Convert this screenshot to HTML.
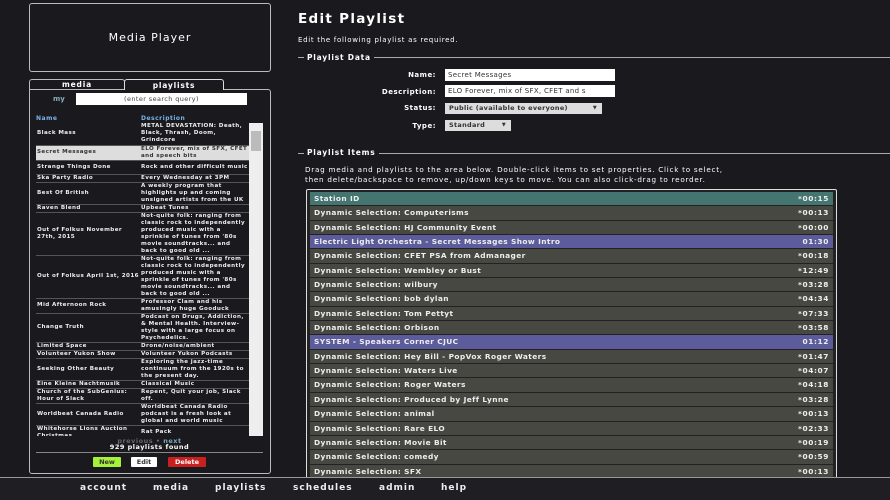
<!DOCTYPE html>
<html><head><meta charset="utf-8"><style>
*{margin:0;padding:0;box-sizing:border-box}
body{width:890px;height:500px;overflow:hidden;background:#1a191e;color:#fff;font-family:"DejaVu Sans","Liberation Sans",sans-serif;font-weight:bold;position:relative}
.abs{position:absolute}
.box{border:1px solid #bbb;border-radius:3px}
#lt td{font-size:5.6px;line-height:7px;vertical-align:middle;border-bottom:1px solid #555;padding:0 1px;color:#eee;letter-spacing:0.4px}
#lt{border-collapse:collapse;width:213px}
.row{height:14.35px;line-height:13px;font-size:7.4px;padding:0 4px;border-bottom:1.5px solid #222;background:#474842;display:flex;justify-content:space-between;letter-spacing:0.4px;color:#eee}
.row span:last-child{letter-spacing:0.6px}
.t{background:#447570}.p{background:#5c5c9c}
.lbl{font-size:7px;text-align:right;width:138px;letter-spacing:0.5px}
.inp{background:#fff;color:#333;font-size:7px;height:12px;line-height:12px;padding-left:3px;letter-spacing:0.3px;overflow:hidden;white-space:nowrap;font-weight:normal}
.sel{background:#ddd;color:#333;font-size:6.5px;height:11px;line-height:11px;padding-left:4px;letter-spacing:0.3px}
.nav span{position:absolute;top:483px;font-size:9px;letter-spacing:1px;color:#eee}
</style></head><body>
<div class="abs box" style="left:29px;top:3px;width:242px;height:69px;text-align:center;line-height:67px;font-size:11px;letter-spacing:1px;font-weight:normal">Media Player</div>
<div class="abs" style="left:29px;top:79px;width:96px;height:10px;border:1px solid #bbb;border-bottom:none;border-radius:3px 3px 0 0;font-size:7.5px;text-align:center;line-height:9px;letter-spacing:0.8px">media</div>
<div class="abs" style="left:124px;top:79px;width:100px;height:11px;border:1px solid #ddd;border-bottom:none;border-radius:3px 3px 0 0;font-size:7.5px;text-align:center;line-height:11px;letter-spacing:0.8px;background:#1a191e;z-index:2">playlists</div>
<div class="abs box" style="left:29px;top:89px;width:242px;height:385px;border-radius:0 3px 3px 3px"></div>
<div class="abs" style="left:53px;top:95px;font-size:7px;color:#8ab">my</div>
<div class="abs" style="left:76px;top:93px;width:171px;height:12px;background:#fff;color:#444;font-size:6.5px;text-align:center;line-height:12px;letter-spacing:0.4px;font-weight:normal">(enter search query)</div>
<div class="abs" style="left:36px;top:115px;font-size:6px;color:#7ab4e8;letter-spacing:0.5px">Name</div>
<div class="abs" style="left:141px;top:115px;font-size:6px;color:#7ab4e8;letter-spacing:0.5px">Description</div>
<div class="abs" style="left:36px;top:123px;width:213px;height:313px;overflow:hidden">
<table id="lt">
<tr style="height:22px"><td style="width:104px">Black Mass</td><td>METAL DEVASTATION: Death, Black, Thrash, Doom, Grindcore</td></tr>
<tr style="height:12px;background:#ddd"><td style="color:#333">Secret Messages</td><td style="color:#333">ELO Forever, mix of SFX, CFET and speech bits</td></tr>
<tr style="height:14px"><td>Strange Things Done</td><td>Rock and other difficult music</td></tr>
<tr style="height:8px"><td>Ska Party Radio</td><td>Every Wednesday at 3PM</td></tr>
<tr style="height:18px"><td>Best Of British</td><td>A weekly program that highlights up and coming unsigned artists from the UK</td></tr>
<tr style="height:7px"><td>Raven Blend</td><td>Upbeat Tunes</td></tr>
<tr style="height:43px"><td>Out of Folkus November 27th, 2015</td><td>Not-quite folk: ranging from classic rock to independently produced music with a sprinkle of tunes from '80s movie soundtracks... and back to good old ...</td></tr>
<tr style="height:42px"><td>Out of Folkus April 1st, 2016</td><td>Not-quite folk: ranging from classic rock to independently produced music with a sprinkle of tunes from '80s movie soundtracks... and back to good old ...</td></tr>
<tr style="height:14px"><td>Mid Afternoon Rock</td><td>Professor Clam and his amusingly huge Gooduck</td></tr>
<tr style="height:29px"><td>Change Truth</td><td>Podcast on Drugs, Addiction, &amp; Mental Health. Interview-style with a large focus on Psychedelics.</td></tr>
<tr style="height:7px"><td>Limited Space</td><td>Drone/noise/ambient</td></tr>
<tr style="height:7px"><td>Volunteer Yukon Show</td><td>Volunteer Yukon Podcasts</td></tr>
<tr style="height:20px"><td>Seeking Other Beauty</td><td>Exploring the jazz-time continuum from the 1920s to the present day.</td></tr>
<tr style="height:7px"><td>Eine Kleine Nachtmusik</td><td>Classical Music</td></tr>
<tr style="height:14px"><td>Church of the SubGenius: Hour of Slack</td><td>Repent, Quit your job, Slack off.</td></tr>
<tr style="height:21px"><td>Worldbeat Canada Radio</td><td>Worldbeat Canada Radio podcast is a fresh look at global and world music</td></tr>
<tr style="height:14px"><td>Whitehorse Lions Auction Christmas</td><td>Rat Pack</td></tr>
<tr style="height:14px"><td>CJUC Presents: Yukon Spotlight</td><td>All Yukon Music for the hour</td></tr>
</table></div>
<div class="abs" style="left:249px;top:123px;width:14px;height:313px;background:#eee"></div>
<div class="abs" style="left:251px;top:131px;width:10px;height:20px;background:#bbb"></div>
<div class="abs" style="left:36px;top:437px;width:227px;text-align:center;font-size:6.5px;color:#666;letter-spacing:0.5px">previous &bull; <span style="color:#7ab">next</span></div>
<div class="abs" style="left:36px;top:443px;width:227px;text-align:center;font-size:6.5px;letter-spacing:0.5px">929 playlists found</div>
<div class="abs" style="left:36px;top:452px;width:227px;height:1px;background:#888"></div>
<div class="abs" style="left:93px;top:457px;width:28px;height:10px;background:#a5f23a;color:#333;font-size:6.5px;text-align:center;line-height:10px;border-radius:1px">New</div>
<div class="abs" style="left:131px;top:457px;width:26px;height:10px;background:#fff;color:#333;font-size:6.5px;text-align:center;line-height:10px;border-radius:1px">Edit</div>
<div class="abs" style="left:168px;top:457px;width:38px;height:10px;background:#c8201f;color:#fff;font-size:6.5px;text-align:center;line-height:10px;border-radius:1px">Delete</div>

<div class="abs" style="left:298px;top:11px;font-size:13.5px;letter-spacing:1.3px">Edit Playlist</div>
<div class="abs" style="left:298px;top:36px;font-size:7px;letter-spacing:0.7px;font-weight:normal">Edit the following playlist as required.</div>
<div class="abs" style="left:298px;top:57px;width:592px;height:1px;background:#aaa"></div>
<div class="abs" style="left:304px;top:53px;font-size:7.5px;letter-spacing:0.8px;background:#1a191e;padding:0 3px">Playlist Data</div>
<div class="abs lbl" style="left:298px;top:71px">Name:</div>
<div class="abs inp" style="left:445px;top:69px;width:170px">Secret Messages</div>
<div class="abs lbl" style="left:298px;top:88px">Description:</div>
<div class="abs inp" style="left:445px;top:85px;width:170px">ELO Forever, mix of SFX, CFET and s</div>
<div class="abs lbl" style="left:298px;top:104px">Status:</div>
<div class="abs sel" style="left:445px;top:103px;width:157px">Public (available to everyone) <span style="position:absolute;right:5px;font-size:5px">▼</span></div>
<div class="abs lbl" style="left:298px;top:122px">Type:</div>
<div class="abs sel" style="left:445px;top:120px;width:66px">Standard <span style="position:absolute;right:5px;font-size:5px">▼</span></div>
<div class="abs" style="left:298px;top:153px;width:592px;height:1px;background:#aaa"></div>
<div class="abs" style="left:304px;top:148px;font-size:7.5px;letter-spacing:0.8px;background:#1a191e;padding:0 3px">Playlist Items</div>
<div class="abs" style="left:305px;top:165px;font-size:7.2px;letter-spacing:0.75px;line-height:10px;font-weight:normal;width:590px">Drag media and playlists to the area below. Double-click items to set properties. Click to select,<br>then delete/backspace to remove, up/down keys to move. You can also click-drag to reorder.</div>
<div class="abs" style="left:306px;top:189px;width:531px;height:300px;border:1px solid #ddd;border-radius:2px;padding:2px 3px 0 3px;overflow:hidden;background:#222">
<div class="row t"><span>Station ID</span><span>*00:15</span></div>
<div class="row"><span>Dynamic Selection: Computerisms</span><span>*00:13</span></div>
<div class="row"><span>Dynamic Selection: HJ Community Event</span><span>*00:00</span></div>
<div class="row p"><span>Electric Light Orchestra - Secret Messages Show Intro</span><span>01:30</span></div>
<div class="row"><span>Dynamic Selection: CFET PSA from Admanager</span><span>*00:18</span></div>
<div class="row"><span>Dynamic Selection: Wembley or Bust</span><span>*12:49</span></div>
<div class="row"><span>Dynamic Selection: wilbury</span><span>*03:28</span></div>
<div class="row"><span>Dynamic Selection: bob dylan</span><span>*04:34</span></div>
<div class="row"><span>Dynamic Selection: Tom Pettyt</span><span>*07:33</span></div>
<div class="row"><span>Dynamic Selection: Orbison</span><span>*03:58</span></div>
<div class="row p"><span>SYSTEM - Speakers Corner CJUC</span><span>01:12</span></div>
<div class="row"><span>Dynamic Selection: Hey Bill - PopVox Roger Waters</span><span>*01:47</span></div>
<div class="row"><span>Dynamic Selection: Waters Live</span><span>*04:07</span></div>
<div class="row"><span>Dynamic Selection: Roger Waters</span><span>*04:18</span></div>
<div class="row"><span>Dynamic Selection: Produced by Jeff Lynne</span><span>*03:28</span></div>
<div class="row"><span>Dynamic Selection: animal</span><span>*00:13</span></div>
<div class="row"><span>Dynamic Selection: Rare ELO</span><span>*02:33</span></div>
<div class="row"><span>Dynamic Selection: Movie Bit</span><span>*00:19</span></div>
<div class="row"><span>Dynamic Selection: comedy</span><span>*00:59</span></div>
<div class="row"><span>Dynamic Selection: SFX</span><span>*00:13</span></div>
<div class="row"><span>Dynamic Selection: SFX</span><span>*00:13</span></div>
</div>
<div class="abs" style="left:0;top:477px;width:890px;height:23px;background:#1f1e23;border-top:1.5px solid #999"></div>
<div class="nav"><span style="left:80px">account</span><span style="left:153px">media</span><span style="left:215px">playlists</span><span style="left:293px">schedules</span><span style="left:379px">admin</span><span style="left:441px">help</span></div>
</body></html>
